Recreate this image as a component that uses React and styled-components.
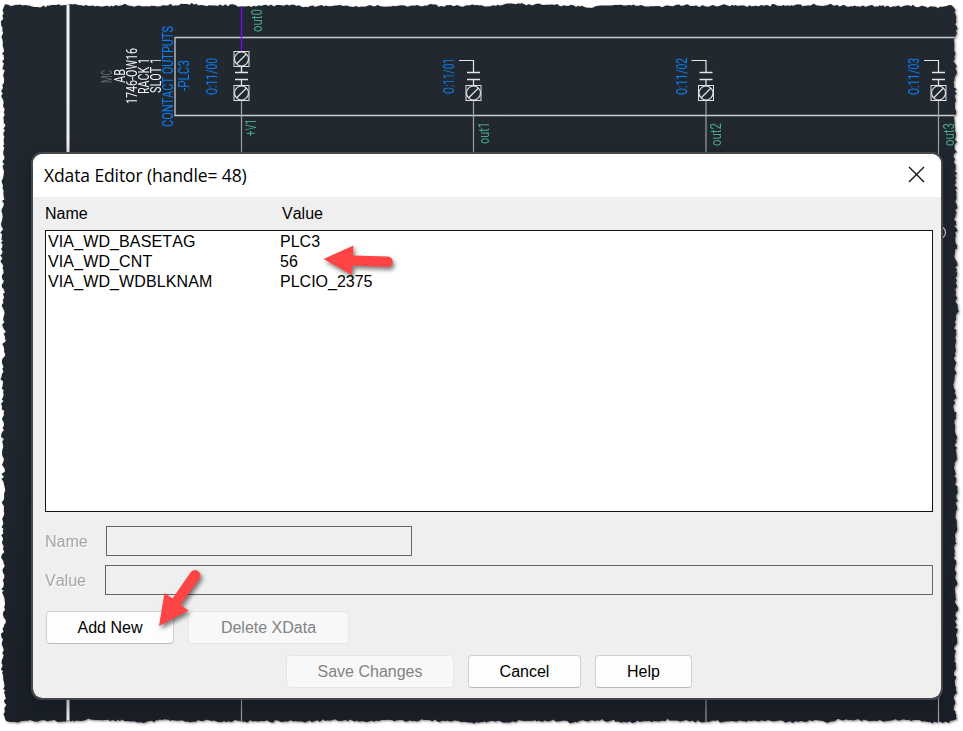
import React from "react";
import styled, { createGlobalStyle } from "styled-components";

const GlobalStyle = createGlobalStyle`
    * {
        box-sizing: border-box;
    }
    body {
        margin: 0;
        background-color: #fff;
        overflow: hidden;
    }
`;

const Stage = styled.main`
    position: relative;
    width: 963px;
    height: 731px;
    padding: 152px 0 0 31px;
    font-family: "Liberation Sans", Arial, sans-serif;
    font-size: 16px;
    font-kerning: none;
`;

const Drawing = styled.svg`
    position: absolute;
    inset: 0;
    filter: drop-shadow(1px 1.5px 0.8px rgba(0, 0, 0, 0.45));
`;

const CadText = styled.text`
    font-family: Roboto, sans-serif;
    font-weight: 400;
    font-size: 14px;
    fill: ${(props) => props.$color};
`;

const Dialog = styled.section`
    position: relative;
    display: flex;
    flex-direction: column;
    width: 912px;
    height: 548px;
    border: 2px solid #44484d;
    border-radius: 11px;
    background-color: #efefef;
    background-clip: padding-box;
    box-shadow: 0 6px 20px rgba(10, 12, 22, 0.4);
    color: #000;
`;

const TitleBar = styled.header`
    display: flex;
    justify-content: space-between;
    height: 43px;
    padding: 0 16px 0 11px;
    border-radius: 9px 9px 0 0;
    background-color: #fff;
`;

const Title = styled.h1`
    margin: 0;
    font-family: "Open Sans", "Noto Sans", sans-serif;
    font-size: 17.5px;
    font-weight: 400;
    line-height: 43px;
    letter-spacing: -0.11px;
    white-space: nowrap;
`;

const CloseButton = styled.button`
    display: flex;
    padding: 12px 0 0;
    border: none;
    background: none;
`;

const Body = styled.div`
    padding: 0 8px 0 12px;
`;

const Columns = styled.div`
    display: grid;
    grid-template-columns: ${(props) => props.$first}px 1fr;
    line-height: ${(props) => props.$height}px;
    white-space: nowrap;
`;

const RowName = styled.span`
    letter-spacing: 0.12px;
`;

const List = styled.div`
    height: 282px;
    padding: 1px 0 0 2px;
    border: 1px solid #111;
    background-color: #fff;
`;

const Field = styled.label`
    display: flex;
    align-items: center;
    height: 30px;
    margin-top: ${(props) => props.$gap}px;
    color: #a6a6a6;
    text-shadow: 1px 1px 0 #fff;
`;

const FieldName = styled.span`
    width: ${(props) => props.$width}px;
    padding-top: 2px;
`;

const Input = styled.input`
    width: ${(props) => props.$width}px;
    height: 30px;
    border: 1px solid #666;
    border-radius: 0;
    background-color: #efefef;
`;

const ButtonRow = styled.div`
    display: flex;
    gap: 14px;
    margin-top: ${(props) => props.$gap}px;
    padding-left: ${(props) => props.$indent}px;
`;

const Button = styled.button`
    width: ${(props) => props.$width}px;
    height: 33px;
    padding: 0;
    border: 1px solid #d0d0d0;
    border-bottom-color: #bababa;
    border-radius: 4px;
    background-color: #fdfdfd;
    color: #000;
    font-family: inherit;
    font-size: 16px;
    white-space: nowrap;

    &:disabled {
        border-color: #e6e6e6;
        background-color: #f8f8f8;
        color: #838383;
    }
`;

const Arrows = styled.svg`
    position: absolute;
    inset: 0;
    pointer-events: none;
    filter: drop-shadow(2px 3px 2px rgba(0, 0, 0, 0.5));
`;

const rows = [
    ["VIA_WD_BASETAG", "PLC3"],
    ["VIA_WD_CNT", "56"],
    ["VIA_WD_WDBLKNAM", "PLCIO_2375"],
];

// text, baseline x, start y, length, colour
const labels = [
    ["MC", 111.5, 83, 13, "#6c7074"],
    ["AB", 124.5, 83, 14, "#f4f6f8"],
    ["1746-OW16", 136.5, 104, 56, "#f4f6f8"],
    ["RACK 1", 148.5, 94, 36, "#f4f6f8"],
    ["SLOT 1", 160.5, 93, 35, "#f4f6f8"],
    ["CONTACT OUTPUTS", 173, 127, 101, "#0a80fa"],
    ["-PLC3", 189, 91, 31, "#0a80fa"],
    ["O:11/00", 216.5, 95, 37, "#0a80fa"],
    ["O:11/01", 454, 94, 36, "#0a80fa"],
    ["O:11/02", 686.5, 95, 37, "#0a80fa"],
    ["O:11/03", 919, 95, 37, "#0a80fa"],
    ["out0", 261.5, 32, 23, "#4aa58a"],
    ["+V1", 256, 136, 17, "#4aa58a"],
    ["out1", 489, 144, 22, "#4aa58a"],
    ["out2", 721, 146, 23, "#4aa58a"],
    ["out3", 953.5, 146, 23, "#4aa58a"],
];

// small repeatable noise for the ragged paper border
const makeNoise = (start) => {
    let seed = start;
    return () => {
        seed = (seed * 16807) % 2147483647;
        return seed / 2147483647;
    };
};

const tornPath = () => {
    const noise = makeNoise(4821);
    const points = [];
    const edge = (from, to, place) => {
        const dir = Math.sign(to - from);
        let drift = 0;
        for (let t = from; (to - t) * dir > 0; t += dir * (1.2 + noise() * 2.4)) {
            drift = drift * 0.85 + (noise() - 0.5) * 1.6;
            points.push(place(t, drift + (noise() - 0.5) * 2.8));
        }
    };
    edge(5, 952, (t, n) => [t, 5.6 + n * 0.75]);
    edge(8, 719, (t, n) => [955.8 + n, t]);
    edge(952, 5, (t, n) => [t, 721.2 + n * 0.75]);
    edge(719, 8, (t, n) => [3.3 + n, t]);
    return "M" + points.map(([x, y]) => `${x.toFixed(1)} ${y.toFixed(1)}`).join("L") + "Z";
};

const Terminal = ({ x, y }) => (
    <g stroke="#e0e2e4" fill="none">
        <rect x={x - 7.5} y={y - 7.5} width="15" height="15" />
        <circle cx={x} cy={y} r="7" strokeWidth="1.2" />
        <path d={`M${x - 5} ${y + 5}L${x + 5} ${y - 5}`} strokeWidth="1.2" />
    </g>
);

const Contact = ({ x, first, wireEnd = 731 }) => (
    <g>
        {first ? (
            <path d={`M${x} 67V72.5`} stroke="#e8e8e8" strokeWidth="1.4" />
        ) : (
            <path d={`M${x - 14.5} 60.5H${x}V72.5`} stroke="#e8e8e8" strokeWidth="1.2" fill="none" />
        )}
        <path
            d={`M${x - 6.5} 72.5H${x + 6.5}M${x - 6.5} 79.5H${x + 6.5}M${x} 80V85`}
            stroke="#e4e4e4"
            strokeWidth="1.3"
        />
        {first && <Terminal x={x} y={59} />}
        <Terminal x={x} y={93} />
        <path d={`M${x} 101V${wireEnd}`} stroke="#a0a2a3" strokeWidth="1.2" />
    </g>
);

const Schematic = () => (
    <Drawing width="963" height="731">
        <defs>
            <linearGradient id="paper" x1="0" y1="0" x2="0" y2="1">
                <stop offset="0" stopColor="#222830" />
                <stop offset="0.6" stopColor="#20272f" />
                <stop offset="1" stopColor="#1b2028" />
            </linearGradient>
            <clipPath id="torn">
                <path d={tornPath()} />
            </clipPath>
        </defs>
        <g clipPath="url(#torn)">
            <rect width="963" height="731" fill="url(#paper)" />
            <path d="M68 0V731" stroke="#f2f2f2" strokeWidth="3" />
            <path d="M960 37.5H175V115.5H960" stroke="#c8cbcd" strokeWidth="1.3" fill="none" />
            <path d="M241.5 0V51" stroke="#7a08f0" strokeWidth="1.3" />
            <Contact x={241.5} first />
            <Contact x={473.5} wireEnd={400} />
            <Contact x={706} />
            <Contact x={938.5} />
            <circle cx="939.5" cy="232.5" r="6" stroke="#ddd" strokeWidth="1.2" fill="none" />
            {labels.map(([text, x, y, length, color]) => (
                <CadText
                    key={text}
                    $color={color}
                    transform={`translate(${x} ${y}) rotate(-90)`}
                    textLength={length}
                    lengthAdjust="spacingAndGlyphs"
                >
                    {text}
                </CadText>
            ))}
        </g>
    </Drawing>
);

const App = () => {
    return (
        <Stage>
            <GlobalStyle />
            <Schematic />
            <Dialog>
                <TitleBar>
                    <Title>Xdata Editor (handle= 48)</Title>
                    <CloseButton aria-label="Close">
                        <svg width="17" height="17" stroke="#111" strokeWidth="1.4">
                            <path d="M1 1L16 16M16 1L1 16" />
                        </svg>
                    </CloseButton>
                </TitleBar>
                <Body>
                    <Columns $first={237} $height={33}>
                        <span>Name</span>
                        <span>Value</span>
                    </Columns>
                    <List>
                        {rows.map(([name, value]) => (
                            <Columns key={name} $first={232} $height={20}>
                                <RowName>{name}</RowName>
                                <span>{value}</span>
                            </Columns>
                        ))}
                    </List>
                    <Field $gap={14}>
                        <FieldName $width={61}>Name</FieldName>
                        <Input $width={306} disabled />
                    </Field>
                    <Field $gap={9}>
                        <FieldName $width={60}>Value</FieldName>
                        <Input $width={828} disabled />
                    </Field>
                    <ButtonRow $gap={16} $indent={1}>
                        <Button $width={128}>Add New</Button>
                        <Button $width={161} disabled>Delete XData</Button>
                    </ButtonRow>
                    <ButtonRow $gap={11} $indent={241}>
                        <Button $width={168} disabled>Save Changes</Button>
                        <Button $width={113}>Cancel</Button>
                        <Button $width={97}>Help</Button>
                    </ButtonRow>
                </Body>
            </Dialog>
            <Arrows width="963" height="731" fill="#fe4444">
                <path d="M323.5 259L353.5 245.5L353 255.5L387.5 256.5A5 5 0 0 1 387.5 267L352.5 265.5L352 275Z" />
                <path d="M159 626L164.5 593L172.5 598.5L190.5 572.5A5.3 5.3 0 0 1 199.5 578.5L180.5 605L188.5 610.5Z" />
            </Arrows>
        </Stage>
    );
};

export default App;
